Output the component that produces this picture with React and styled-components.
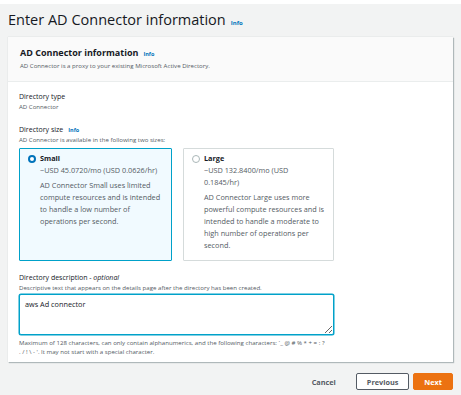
import React, { useState } from 'react'
import styled, { createGlobalStyle } from 'styled-components'

const GlobalStyle = createGlobalStyle`
  html, body {
    margin: 0;
    padding: 0;
    background: #f2f3f3;
    font-family: "Open Sans", "Noto Sans", sans-serif;
    color: #16191f;
  }
  * { box-sizing: border-box; }
`

const Page = styled.div`
  width: 461px;
  height: 395px;
  border-top: 4px solid #ffffff;
  overflow: hidden;
`

const PageTitle = styled.h1`
  margin: 0;
  padding: 3px 8px 0 8px;
  height: 33px;
  font-size: 14.5px;
  font-weight: 400;
  line-height: 26px;
  display: flex;
  align-items: baseline;
  gap: 5px;
`

const InfoLink = styled.span`
  color: #0073bb;
  font-weight: 700;
  font-size: ${(p) => p.size || 5.5}px;
`

const Card = styled.section`
  margin: 0 8px;
  background: #ffffff;
  box-shadow: 1px 1px 1px rgba(0, 28, 36, 0.25), 0 0 1px rgba(0, 28, 36, 0.2);
`

const CardHeader = styled.header`
  background: #fafafa;
  border-bottom: 1px solid #eaeded;
  height: 45px;
  padding: 9px 12px 0 12px;
`

const CardTitle = styled.h2`
  margin: 0;
  font-size: 9px;
  font-weight: 700;
  line-height: 14px;
  display: flex;
  align-items: baseline;
  gap: 5px;
`

const Small = styled.div`
  font-size: 6.1px;
  line-height: 9px;
  color: #545b64;
  white-space: nowrap;
`

const CardBody = styled.div`
  padding: 10px 11px 6px 11px;
  display: flex;
  flex-direction: column;
`

const Field = styled.div`
  margin-bottom: ${(p) => p.gap || 0}px;
`

const Label = styled.div`
  font-size: 7px;
  line-height: 10px;
  color: #16191f;
  display: flex;
  align-items: baseline;
  gap: 5px;
  em { font-style: italic; }
`

const Tiles = styled.div`
  display: grid;
  grid-template-columns: 153px 151px;
  gap: 11px;
  margin-top: 4px;
`

const Tile = styled.label`
  display: flex;
  gap: 4px;
  align-items: flex-start;
  height: 113px;
  padding: 3px 8px;
  border: 1px solid ${(p) => (p.selected ? '#00a1c9' : '#d5dbdb')};
  background: ${(p) => (p.selected ? '#f1faff' : '#ffffff')};
  border-radius: 1px;
  cursor: pointer;
`

const Radio = styled.span`
  flex: none;
  width: 8px;
  height: 8px;
  margin-top: 3px;
  border-radius: 50%;
  border: ${(p) => (p.checked ? '2.5px solid #0073bb' : '1px solid #aab7b8')};
  background: #ffffff;
`

const TileText = styled.div`
  display: flex;
  flex-direction: column;
  gap: 3px;
  font-size: 7.3px;
  line-height: 12px;
  color: #545b64;
  b {
    color: #16191f;
    font-weight: 700;
  }
`

const TextArea = styled.textarea`
  display: block;
  width: 315px;
  height: 41px;
  margin-top: 2px;
  padding: 4px 5px;
  border: 1px solid #00a1c9;
  border-radius: 2px;
  box-shadow: 0 0 0 0.5px #00a1c9;
  font-family: "Open Sans", "Noto Sans", sans-serif;
  font-size: 7.3px;
  line-height: 11px;
  color: #16191f;
  outline: none;
  resize: vertical;
`

const Hint = styled(Small)`
  margin-top: 3px;
  width: 308px;
  white-space: normal;
`

const Footer = styled.footer`
  display: flex;
  justify-content: flex-end;
  align-items: center;
  gap: 4px;
  padding: 11px 8px 0 0;
`

const Button = styled.button`
  height: 17px;
  padding: 0 ${(p) => (p.variant === 'link' ? 15 : 10)}px;
  font-family: "Open Sans", "Noto Sans", sans-serif;
  font-size: 7.3px;
  font-weight: 700;
  border-radius: 2px;
  cursor: pointer;
  color: ${(p) => (p.variant === 'primary' ? '#ffffff' : '#545b64')};
  background: ${(p) => (p.variant === 'primary' ? '#ec7211' : p.variant === 'link' ? 'transparent' : '#ffffff')};
  border: 1px solid ${(p) => (p.variant === 'primary' ? '#ec7211' : p.variant === 'link' ? 'transparent' : '#545b64')};
`

const sizes = [
  {
    id: 'small',
    name: 'Small',
    price: '~USD 45.0720/mo (USD 0.0626/hr)',
    text: 'AD Connector Small uses limited compute resources and is intended to handle a low number of operations per second.',
  },
  {
    id: 'large',
    name: 'Large',
    price: '~USD 132.8400/mo (USD 0.1845/hr)',
    text: 'AD Connector Large uses more powerful compute resources and is intended to handle a moderate to high number of operations per second.',
  },
]

function App() {
  const [size, setSize] = useState('small')
  const [desc, setDesc] = useState('aws Ad connector')

  return (
    <Page>
      <GlobalStyle />
      <PageTitle>
        Enter AD Connector information <InfoLink size={6}>Info</InfoLink>
      </PageTitle>
      <Card>
        <CardHeader>
          <CardTitle>
            AD Connector information <InfoLink>Info</InfoLink>
          </CardTitle>
          <Small>AD Connector is a proxy to your existing Microsoft Active Directory.</Small>
        </CardHeader>
        <CardBody>
          <Field gap={14}>
            <Label>Directory type</Label>
            <Small>AD Connector</Small>
          </Field>
          <Field gap={12}>
            <Label>
              Directory size <InfoLink>Info</InfoLink>
            </Label>
            <Small>AD Connector is available in the following two sizes:</Small>
            <Tiles>
              {sizes.map((s) => (
                <Tile key={s.id} selected={size === s.id} onClick={() => setSize(s.id)}>
                  <Radio checked={size === s.id} />
                  <TileText>
                    <b>{s.name}</b>
                    <span style={{ marginTop: -3 }}>{s.price}</span>
                    <span>{s.text}</span>
                  </TileText>
                </Tile>
              ))}
            </Tiles>
          </Field>
          <Field>
            <Label>
              <span>
                Directory description - <em>optional</em>
              </span>
            </Label>
            <Small>Descriptive text that appears on the details page after the directory has been created.</Small>
            <TextArea value={desc} onChange={(e) => setDesc(e.target.value)} />
            <Hint>
              Maximum of 128 characters, can only contain alphanumerics, and the following characters: `_ @ # % * + = : ? . / ! \ - '. It may not start with a special character.
            </Hint>
          </Field>
        </CardBody>
      </Card>
      <Footer>
        <Button variant="link">Cancel</Button>
        <Button>Previous</Button>
        <Button variant="primary">Next</Button>
      </Footer>
    </Page>
  )
}

export default App
